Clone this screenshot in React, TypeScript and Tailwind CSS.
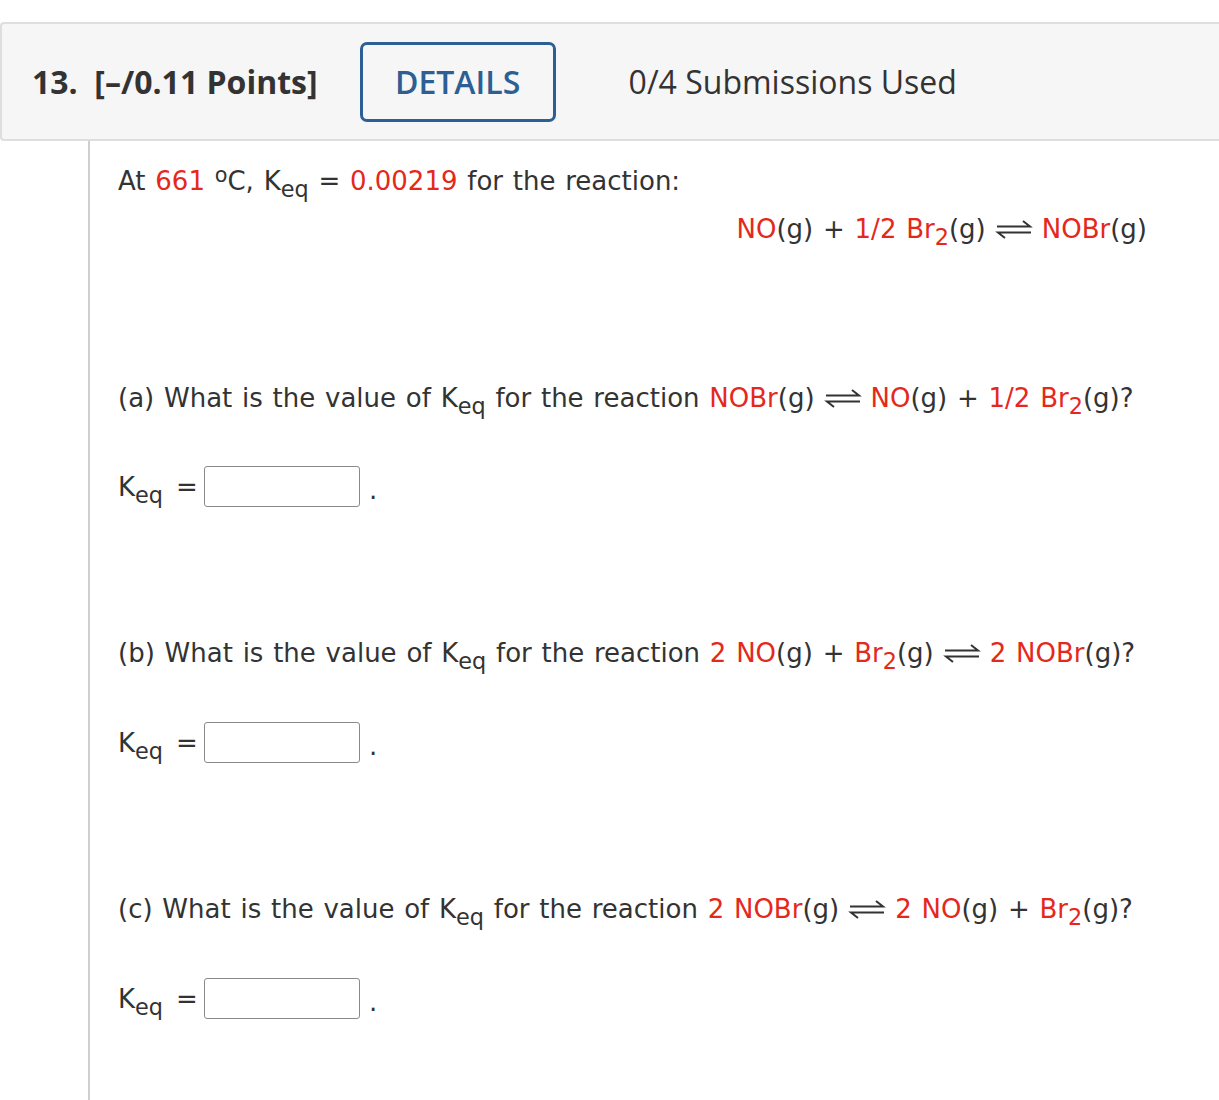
const red = "text-[#e5281c]";

function Sub({ children }: { children: React.ReactNode }) {
  return <span className="relative top-[0.32em] text-[0.86em] leading-none">{children}</span>;
}

function Keq() {
  return (
    <span>
      K<Sub>eq</Sub>
    </span>
  );
}

function Arrow() {
  return (
    <svg width="38" height="20" viewBox="0 0 38 20" className="inline-block mx-[9px] -mt-[4px] align-middle">
      <path d="M2 7.5 H35 L28 2" fill="none" stroke="#333" strokeWidth="2" />
      <path d="M36 13.5 H3 L10 19" fill="none" stroke="#333" strokeWidth="2" />
    </svg>
  );
}

function AnswerRow() {
  return (
    <div className="flex items-center h-[41px]">
      <span className="w-[58px]">
        <Keq />
      </span>
      <span className="w-[28px]">=</span>
      <div className="w-[156px] h-[41px] border border-[#8a8a8a] rounded-[3px] bg-white"></div>
      <span className="ml-[9px] mt-[6px]">.</span>
    </div>
  );
}

export default function App() {
  return (
    <div className="w-[1219px] min-h-[1100px] bg-white pt-[22px] text-[#333]">
      <div className="h-[119px] flex items-center bg-[#f6f6f6] border-y-2 border-l-2 border-[#dedede] rounded-l-[4px] pl-[30px] font-['Open_Sans',sans-serif]">
        <div className="text-[32px] font-bold text-[#333]">
          13.&nbsp;&nbsp;[–/0.11 Points]
        </div>
        <div className="ml-[42px] w-[196px] h-[80px] border-[3px] border-[#2c5f94] rounded-[7px] flex items-center justify-center text-[32px] font-semibold text-[#2c5f94]">
          DETAILS
        </div>
        <div className="ml-[73px] text-[32px] text-[#333]">0/4 Submissions Used</div>
      </div>
      <div className="ml-[88px] border-l-2 border-[#cfcfcf] min-h-[959px] pl-[28px] pr-[72px] text-[26px] leading-[30px] [word-spacing:1.5px] font-['DejaVu_Sans',Verdana,sans-serif]">
        <div className="pt-[25px]">
          At <span className={red}>661</span> <sup className="text-[0.8em] relative -top-[0.4em]">o</sup>C, <Keq /> ={" "}
          <span className={red}>0.00219</span> for the reaction:
        </div>
        <div className="mt-[18px] text-right">
          <span className={red}>NO</span>(g) + <span className={red}>1/2 Br<Sub>2</Sub></span>(g)
          <Arrow />
          <span className={red}>NOBr</span>(g)
        </div>

        <div className="mt-[139px]">
          (a) What is the value of <Keq /> for the reaction <span className={red}>NOBr</span>(g)
          <Arrow />
          <span className={red}>NO</span>(g) + <span className={red}>1/2 Br<Sub>2</Sub></span>(g)?
        </div>
        <div className="mt-[53px]">
          <AnswerRow />
        </div>

        <div className="mt-[131px]">
          (b) What is the value of <Keq /> for the reaction <span className={red}>2 NO</span>(g) +{" "}
          <span className={red}>Br<Sub>2</Sub></span>(g)
          <Arrow />
          <span className={red}>2 NOBr</span>(g)?
        </div>
        <div className="mt-[54px]">
          <AnswerRow />
        </div>

        <div className="mt-[131px]">
          (c) What is the value of <Keq /> for the reaction <span className={red}>2 NOBr</span>(g)
          <Arrow />
          <span className={red}>2 NO</span>(g) + <span className={red}>Br<Sub>2</Sub></span>(g)?
        </div>
        <div className="mt-[54px]">
          <AnswerRow />
        </div>
      </div>
    </div>
  );
}
